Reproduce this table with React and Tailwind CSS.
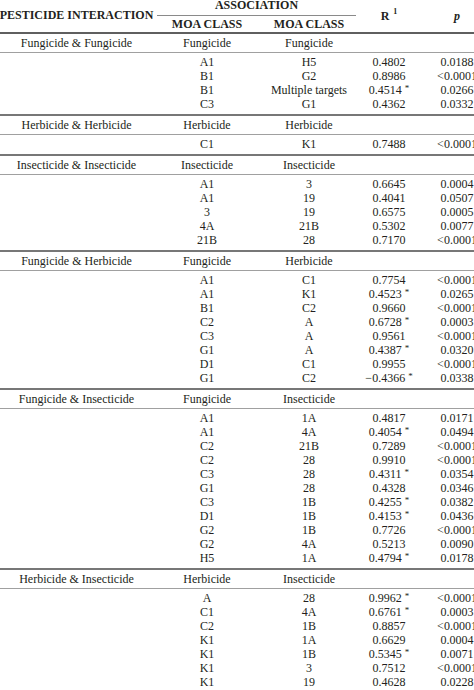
import React from 'react';

const sections = [
  { a: 'Fungicide & Fungicide', b: 'Fungicide', c: 'Fungicide', rows: [
    ['A1', 'H5', '0.4802', '0.0188'],
    ['B1', 'G2', '0.8986', '<0.0001'],
    ['B1', 'Multiple targets', '0.4514 *', '0.0266'],
    ['C3', 'G1', '0.4362', '0.0332'],
  ] },
  { a: 'Herbicide & Herbicide', b: 'Herbicide', c: 'Herbicide', rows: [
    ['C1', 'K1', '0.7488', '<0.0001'],
  ] },
  { a: 'Insecticide & Insecticide', b: 'Insecticide', c: 'Insecticide', rows: [
    ['A1', '3', '0.6645', '0.0004'],
    ['A1', '19', '0.4041', '0.0507'],
    ['3', '19', '0.6575', '0.0005'],
    ['4A', '21B', '0.5302', '0.0077'],
    ['21B', '28', '0.7170', '<0.0001'],
  ] },
  { a: 'Fungicide & Herbicide', b: 'Fungicide', c: 'Herbicide', rows: [
    ['A1', 'C1', '0.7754', '<0.0001'],
    ['A1', 'K1', '0.4523 *', '0.0265'],
    ['B1', 'C2', '0.9660', '<0.0001'],
    ['C2', 'A', '0.6728 *', '0.0003'],
    ['C3', 'A', '0.9561', '<0.0001'],
    ['G1', 'A', '0.4387 *', '0.0320'],
    ['D1', 'C1', '0.9955', '<0.0001'],
    ['G1', 'C2', '\u22120.4366 *', '0.0338'],
  ] },
  { a: 'Fungicide & Insecticide', b: 'Fungicide', c: 'Insecticide', rows: [
    ['A1', '1A', '0.4817', '0.0171'],
    ['A1', '4A', '0.4054 *', '0.0494'],
    ['C2', '21B', '0.7289', '<0.0001'],
    ['C2', '28', '0.9910', '<0.0001'],
    ['C3', '28', '0.4311 *', '0.0354'],
    ['G1', '28', '0.4328', '0.0346'],
    ['C3', '1B', '0.4255 *', '0.0382'],
    ['D1', '1B', '0.4153 *', '0.0436'],
    ['G2', '1B', '0.7726', '<0.0001'],
    ['G2', '4A', '0.5213', '0.0090'],
    ['H5', '1A', '0.4794 *', '0.0178'],
  ] },
  { a: 'Herbicide & Insecticide', b: 'Herbicide', c: 'Insecticide', rows: [
    ['A', '28', '0.9962 *', '<0.0001'],
    ['C1', '4A', '0.6761 *', '0.0003'],
    ['C2', '1B', '0.8857', '<0.0001'],
    ['K1', '1A', '0.6629', '0.0004'],
    ['K1', '1B', '0.5345 *', '0.0071'],
    ['K1', '3', '0.7512', '<0.0001'],
    ['K1', '19', '0.4628', '0.0228'],
  ] },
];

const cols = 'grid grid-cols-[153px_108px_96px_64px_72px]';

function RValue({ v }) {
  if (v.endsWith(' *')) {
    return (
      <span>
        {v.slice(0, -2)}
        <span className="text-[9px] relative -top-[3px] ml-[3px]">*</span>
      </span>
    );
  }
  return <span>{v}</span>;
}

export default function App() {
  return (
    <div
      className="w-[474px] h-[690px] overflow-hidden bg-white text-[#231f20] text-[12px]"
      style={{ fontFamily: '"Liberation Serif", "Times New Roman", serif' }}
    >
      <div className="w-[493px] -mt-[3px]">
        {/* Header */}
        <div className={`${cols} grid-rows-[19px_16px] border-b-2 border-[#5f5f5f] font-bold`}>
          <div className="row-span-2 flex items-center justify-center leading-[14px] whitespace-nowrap">
            PESTICIDE INTERACTION
          </div>
          <div className="col-span-2 flex items-end justify-center pb-[3px] leading-[14px] border-b border-[#8a8a8a] ml-[4px] mr-[1px]">
            ASSOCIATION
          </div>
          <div className="row-span-2 col-start-4 row-start-1 flex items-center justify-center pt-[2px] leading-[14px]">
            R<sup className="text-[8px] ml-[4px] -top-[4px]">1</sup>
          </div>
          <div className="row-span-2 col-start-5 row-start-1 flex items-center justify-center pt-[2px] leading-[14px] italic">
            p
          </div>
          <div className="col-start-2 row-start-2 flex items-center justify-center leading-[14px]">
            MOA CLASS
          </div>
          <div className="col-start-3 row-start-2 flex items-center justify-center leading-[14px]">
            MOA CLASS
          </div>
        </div>

        {sections.map((s, i) => (
          <div key={i} className="border-b-2 border-[#777777]">
            <div className={`${cols} h-[19px] items-center leading-[14px] border-b border-[#a0a0a0] text-center`}>
              <div>{s.a}</div>
              <div>{s.b}</div>
              <div>{s.c}</div>
              <div />
              <div />
            </div>
            <div className="pt-[2px] pb-[3px]">
              {s.rows.map((r, j) => (
                <div key={j} className={`${cols} h-[14px] leading-[14px] text-center whitespace-nowrap`}>
                  <div />
                  <div>{r[0]}</div>
                  <div>{r[1]}</div>
                  <div><RValue v={r[2]} /></div>
                  <div>{r[3]}</div>
                </div>
              ))}
            </div>
          </div>
        ))}
      </div>
    </div>
  );
}
